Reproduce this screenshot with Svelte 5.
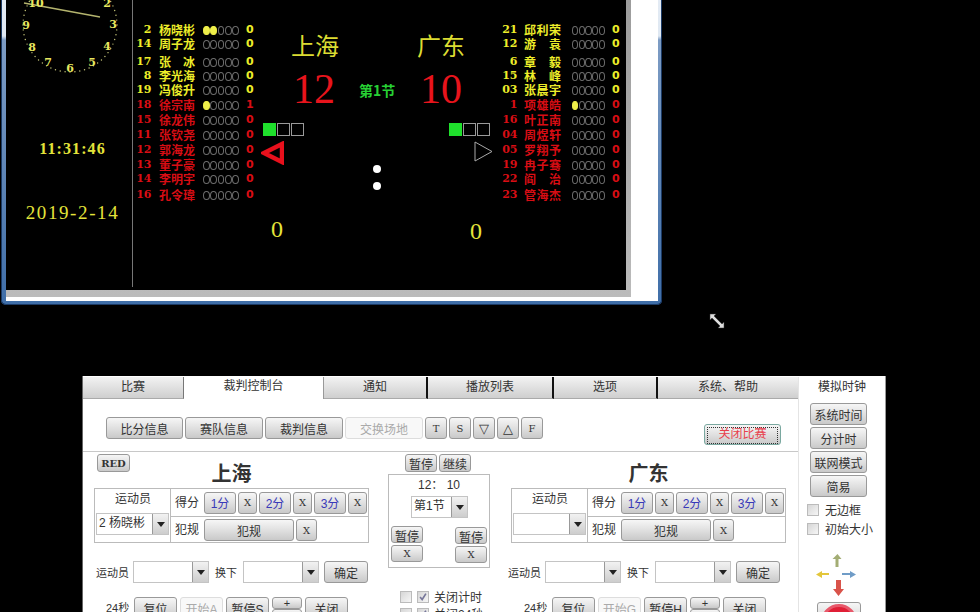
<script>
  const gaps = [0, 0, 4, 0, 0, 1, 1, 1, 1, 1, 0, 2];
  const home = [
    ['2', '杨晓彬', 2, 0], ['14', '周子龙', 0, 0], ['17', '张冰', 0, 0], ['8', '李光海', 0, 0],
    ['19', '冯俊升', 0, 0], ['18', '徐宗南', 1, 1], ['15', '徐龙伟', 0, 0], ['11', '张钦尧', 0, 0],
    ['12', '郭海龙', 0, 0], ['13', '董子豪', 0, 0], ['14', '李明宇', 0, 0], ['16', '孔令瑋', 0, 0]
  ];
  const away = [
    ['21', '邱利荣', 0, 0], ['12', '游袁', 0, 0], ['6', '章毅', 0, 0], ['15', '林峰', 0, 0],
    ['03', '张晨宇', 0, 0], ['1', '项雄皓', 1, 0], ['16', '叶正南', 0, 0], ['04', '周煜轩', 0, 0],
    ['05', '罗翔予', 0, 0], ['19', '冉子骞', 0, 0], ['22', '阎治', 0, 0], ['23', '管海杰', 0, 0]
  ];
  const tabs = ['比赛', '裁判控制台', '通知', '播放列表', '选项', '系统、帮助'];
  const ticks = Array.from({ length: 60 }, (_, i) => {
    const a = (i * Math.PI) / 30;
    return [70 + 47 * Math.sin(a), 25 - 47 * Math.cos(a)];
  });
  const numerals = [
    ['10', 36, 7], ['2', 107, 7], ['3', 113, 28], ['9', 26, 29], ['8', 32, 51],
    ['4', 107, 50], ['7', 48, 66], ['5', 92, 66], ['6', 70, 72]
  ];
</script>

{#snippet list(rows, cls)}
  <div class="list {cls}">
    {#each rows as r, i}
      <div class="row" class:red={i > 4} style="margin-top:{gaps[i]}px">
        <span class="num">{r[0]}</span>
        <span class="name">{r[1]}</span>
        <span class="fouls">
          {#each [0, 1, 2, 3, 4] as k}<i class:on={k < r[2]}></i>{/each}
        </span>
        <span class="pts">{r[3]}</span>
      </div>
    {/each}
  </div>
{/snippet}

{#snippet squares()}
  <div class="squares"><b class="lit"></b><b></b><b></b></div>
{/snippet}

{#snippet dropdown(text, cls)}
  <div class="dd {cls}"><span>{text}</span><em><svg viewBox="0 0 8 5" width="8" height="5"><path d="M0 0h8L4 5z" fill="#222"/></svg></em></div>
{/snippet}

{#snippet team(side, title, player, a, b)}
  <section class="team {side}">
    <header>
      {#if side === 'home'}<button class="red-btn">RED</button>{/if}
      <h2>{title}</h2>
    </header>
    <div class="table">
      <div class="who">
        <div class="who-l">运动员</div>
        {@render dropdown(player, 'who-dd')}
      </div>
      <div class="acts">
        <div class="act first">
          <span>得分</span>
          <button class="pt">1分</button><button class="x">X</button>
          <button class="pt two">2分</button><button class="x">X</button>
          <button class="pt">3分</button><button class="x">X</button>
        </div>
        <div class="act">
          <span>犯规</span>
          <button class="foul">犯规</button><button class="x wide">X</button>
        </div>
      </div>
    </div>
    <div class="sub">
      <span class="lab who-lab">运动员</span>
      {@render dropdown('', 'sub-dd')}
      <span class="lab down">换下</span>
      {@render dropdown('', 'sub-dd')}
      <button class="ok">确定</button>
    </div>
    <div class="shot">
      <span class="lab">24秒</span>
      <button>复位</button>
      <button disabled>{a}</button>
      <button>{b}</button>
      <div class="plus"><button>+</button><button>-</button></div>
      <button>关闭</button>
    </div>
  </section>
{/snippet}

{#snippet check(label, on)}
  <div class="check">
    <i class="cb"></i>
    <i class="cb" class:ticked={on}>{#if on}<svg viewBox="0 0 12 12" width="10" height="10"><path d="M2.5 6l2.5 3 4.500-7" fill="none" stroke="#77779a" stroke-width="2"/></svg>{/if}</i>
    <span>{label}</span>
  </div>
{/snippet}

<div class="desk">
  <div class="win">
    <div class="client">
      <div class="frame">
        <div class="board">
          <aside class="info">
            <svg class="clock" viewBox="0 0 127 75" width="127" height="75">
              {#each ticks as t}<circle cx={t[0]} cy={t[1]} r="0.7" fill="#c8c87a" />{/each}
              <line x1="24" y1="3" x2="100" y2="17" stroke="#b4b46e" stroke-width="1.500" />
              {#each numerals as n}<text x={n[1]} y={n[2]} text-anchor="middle">{n[0]}</text>{/each}
            </svg>
            <div class="time">11:31:46</div>
            <div class="date">2019-2-14</div>
          </aside>
          <div class="stage">
            <h1>全国男子篮球联赛直播系统</h1>
            <div class="lower">
              {@render list(home, 'l')}
              <div class="mid">
                <div class="col a">
                  <div class="tn">上海</div>
                  <div class="sc">12</div>
                  {@render squares()}
                  <svg class="tri" viewBox="0 0 23 24" width="23" height="24"><path d="M3 12L21 3v18z" fill="none" stroke="#e8101c" stroke-width="4.500"/></svg>
                  <div class="zero">0</div>
                </div>
                <div class="col m">
                  <div class="period">第1节</div>
                  <i class="dot"></i><i class="dot two"></i>
                </div>
                <div class="col b">
                  <div class="tn">广东</div>
                  <div class="sc">10</div>
                  {@render squares()}
                  <svg class="tri" viewBox="0 0 19 21" width="19" height="21"><path d="M1 1l17 9.500L1 20z" fill="none" stroke="#aaa" stroke-width="1"/></svg>
                  <div class="zero">0</div>
                </div>
              </div>
              {@render list(away, 'r')}
            </div>
          </div>
        </div>
      </div>
    </div>
  </div>

  <svg class="cursor" viewBox="0 0 16 16" width="16" height="16">
    <path d="M1 1h6L5 3l8 8 2-2v6H9l2-2-8-8-2 2z" fill="#ddd" stroke="#333" stroke-width=".5"/>
  </svg>

  <div class="console">
    <div class="main">
      <nav class="tabs">
        {#each tabs as t, i}<div class="tab" class:active={i === 1}>{t}</div>{/each}
      </nav>
      <div class="toolbar">
        <button class="info-btn first-btn">比分信息</button>
        <button class="info-btn">赛队信息</button>
        <button class="info-btn">裁判信息</button>
        <button class="info-btn" disabled>交换场地</button>
        <button class="tool">T</button>
        <button class="tool">S</button>
        <button class="tool glyph">▽</button>
        <button class="tool glyph">△</button>
        <button class="tool">F</button>
        <button class="close"><span>关闭比赛</span></button>
      </div>
      <div class="panels">
        {@render team('home', '上海', '2 杨晓彬', '开始A', '暂停S')}
        <section class="center">
          <div class="top-btns"><button>暂停</button><button>继续</button></div>
          <div class="timer">
            <div class="t">12： 10</div>
            {@render dropdown('第1节', 'per-dd')}
            <div class="pairs">
              <div class="pair"><button>暂停</button><button>X</button></div>
              <div class="pair low"><button>暂停</button><button>X</button></div>
            </div>
          </div>
          <div class="checks">
            {@render check('关闭计时', true)}
            {@render check('关闭24秒', true)}
          </div>
        </section>
        {@render team('away', '广东', '', '开始G', '暂停H')}
      </div>
    </div>
    <div class="side">
      <div class="side-title">模拟时钟</div>
      <div class="side-btns">
        <button>系统时间</button><button>分计时</button><button>联网模式</button><button>简易</button>
      </div>
      <label class="opt"><i class="cb"></i>无边框</label>
      <label class="opt"><i class="cb"></i>初始大小</label>
      <svg class="arrows" viewBox="0 0 44 44" width="44" height="44">
        <path d="M19.500 14V6h-3l5-5 4 5h-3v8z" fill="#a3ad74"/>
        <path d="M13 22H6v3l-6-3.500L6 18v2h7z" fill="#e3c63a"/>
        <path d="M26 20h8v-2l6 3.500-6 3.500v-3h-8z" fill="#6f9cc7"/>
        <path d="M20 27h5v9h3l-5.500 7-5.500-7h3z" fill="#d9534a"/>
      </svg>
      <button class="power"><i></i></button>
    </div>
  </div>
</div>

<style>
  :global(body) { margin: 0; background: #000; }
  .desk { position: relative; width: 980px; height: 612px; overflow: hidden; background: #000; font-family: "Liberation Sans", "Noto Sans CJK SC", sans-serif; font-size: 12px; color: #333; }
  button { font-family: inherit; font-size: 12px; color: #333; padding: 0; height: 22px; border: 1px solid #999; border-radius: 3px; background: linear-gradient(#f6f6f6, #dedede 55%, #c9c9c9); white-space: nowrap; }
  button:disabled { color: #aaa; border-color: #ddd; background: #f8f8f8; }

  /* top window */
  .win { position: absolute; left: 1px; top: -30px; width: 661px; height: 335px; box-sizing: border-box; padding: 0 4px 4px 5px; border-radius: 0 0 5px 5px; background: linear-gradient(#e8eef6 0, #dfe8f2 66px, #7d9cc4 70px, #3f6ea8 100%); box-shadow: inset 0 -1px #1c3b66, inset 1px 0 #1c3b66, inset -1px 0 #1c3b66; }
  .client { height: 100%; background: #fff; }
  .frame { width: 625px; height: 327px; box-sizing: border-box; padding: 0 5px 7px 0; background: linear-gradient(#999, #bbb); }
  .board { height: 100%; display: flex; background: #000; font-family: "Liberation Serif", "Noto Sans CJK SC", serif; color: #e4e43a; }
  .info { width: 126px; flex: none; border-right: 1px solid #777; margin-bottom: 3px; padding-top: 30px; text-align: center; }
  .clock { display: block; margin-left: -6px; }
  .clock text { font: bold 11px "DejaVu Serif", serif; fill: #e8e860; }
  .time { margin: 64px 0 0 7px; height: 20px; line-height: 20px; font-size: 16px; font-weight: bold; letter-spacing: 1.100px; }
  .date { margin: 43px 0 0 7px; height: 22px; line-height: 22px; font-size: 19px; letter-spacing: 1.600px; white-space: nowrap; }
  .stage { flex: 1; min-width: 0; overflow: hidden; }
  h1 { margin: 0 0 0 98px; height: 33px; overflow: hidden; white-space: nowrap; font: bold 26px/26px "Noto Sans CJK SC", sans-serif; color: #9c0c10; padding-top: 3px; box-sizing: border-box; }
  .lower { display: flex; }
  .list { padding-top: 20px; flex: none; }
  .row { display: grid; height: 14px; align-items: center; color: #eded2a; grid-template-columns: 18px 37px 37px 8px; column-gap: 7px; }
  .l .name { margin-left: 1px; }
  .l .fouls { margin-left: 1px; }
  .r .fouls { margin-left: 4px; }
  .row.red { color: #d80d14; }
  .num { text-align: right; font: bold 11px/14px "DejaVu Serif", serif; letter-spacing: -.3px; }
  .name { font: bold 12px/14px "Noto Sans CJK SC", sans-serif; text-align: justify; text-align-last: justify; }
  .fouls { display: flex; gap: .5px; }
  .fouls i { width: 7px; height: 9px; box-sizing: border-box; border: 1px solid #6c6c6c; border-radius: 50%; }
  .fouls i.on { background: #efef4a; border-color: #efef4a; }
  .pts { font: bold 11px/14px "DejaVu Sans", sans-serif; }
  .mid { width: 245px; flex: none; display: flex; }
  .col { padding-top: 29px; }
  .col.a { width: 101px; }
  .col.m { width: 44px; }
  .col.b { width: 100px; }
  .tn { height: 26px; font: 24px/26px "Noto Sans CJK SC", sans-serif; color: #dcdc32; }
  .sc { margin-top: 10px; height: 42px; font-size: 42px; line-height: 42px; color: #e8141c; }
  .squares { margin-top: 13px; display: flex; gap: 1px; }
  .squares b { width: 13px; height: 13px; box-sizing: border-box; border: 1px solid #9a9a9a; }
  .squares b.lit { background: #1fe02c; border-color: #1fe02c; }
  .tri { display: block; margin-top: 5px; }
  .zero { height: 22px; font-size: 24px; line-height: 22px; }
  .a .tn { margin-left: 37px; }
  .a .sc { margin-left: 39px; }
  .a .squares { margin-left: 9px; }
  .a .tri { margin-left: 7px; }
  .a .zero { margin: 53px 0 0 17px; }
  .b .tn { margin-left: 18px; }
  .b .sc { margin-left: 21px; }
  .b .squares { margin-left: 50px; }
  .b .tri { margin-left: 75px; }
  .b .zero { margin: 58px 0 0 71px; }
  .period { margin-top: 48px; margin-left: 4px; height: 20px; font: bold 14px/20px "Noto Sans CJK SC", sans-serif; color: #27d034; white-space: nowrap; }
  .dot { display: block; width: 8px; height: 8px; border-radius: 50%; background: #fff; margin: 65px 0 0 18px; }
  .dot.two { margin-top: 9px; }

  .cursor { position: absolute; left: 709px; top: 313px; }

  /* console window */
  .console { position: absolute; left: 82px; top: 376px; width: 804px; height: 300px; box-sizing: border-box; display: flex; background: #fff; border-left: 1px solid #666; border-right: 1px solid #999; padding-top: 1px; }
  .main { width: 715px; flex: none; border-right: 1px solid #e4e4e4; }
  .tabs { display: grid; grid-template-columns: 101px 140px 104px 126px 104px 140px; height: 21px; }
  .tab { text-align: center; line-height: 21px; background: linear-gradient(#f2f2f2, #cfcfcf); border-right: 1px solid #777; border-bottom: 1px solid #aaa; box-sizing: border-box; }
  .tab:nth-child(3), .tab:nth-child(4), .tab:nth-child(5) { border-right: 2px solid #111; }
  .tab:nth-child(6) { border-right: 0; }
  .tab.active { background: #fff; border-bottom: 0; border-right: 1px solid #999; line-height: 19px; }
  .toolbar { height: 54px; box-sizing: border-box; padding: 19px 17px 0 23px; display: flex; align-items: flex-start; gap: 2px; border-bottom: 1px solid #c8c8c8; }
  .info-btn { width: 78px; }
  .first-btn { width: 77px; }
  .tool { width: 22px; font-family: "DejaVu Serif", serif; font-size: 10px; }
  .tool.glyph { font: 13px "DejaVu Sans", sans-serif; }
  .close { margin: 7px 0 0 auto; width: 77px; height: 21px; border-color: #7aa8a0; padding: 2px; color: #e8404c; }
  .close span { display: block; line-height: 13px; height: 15px; border: 1px dotted #333; }

  .panels { display: grid; grid-template-columns: 275px 102px 277px; column-gap: 19px; padding-left: 11px; }
  .team.away { padding-left: 2px; }
  header { height: 36px; position: relative; text-align: center; }
  header h2 { margin: 0; padding-top: 9px; font: bold 20px/24px "Noto Sans CJK SC", sans-serif; color: #333; }
  .red-btn { position: absolute; left: 3px; top: 2px; width: 33px; height: 18px; font: bold 10px "DejaVu Serif", serif; }
  .table { height: 55px; box-sizing: border-box; border: 1px solid #bbb; display: flex; }
  .who { width: 76px; flex: none; border-right: 1px solid #bbb; padding: 1px 0 0 1px; text-align: center; box-sizing: border-box; }
  .who-l { height: 18px; line-height: 18px; margin-bottom: 5px; }
  .dd { display: flex; height: 22px; box-sizing: border-box; border: 1px solid #c4c4c4; background: #fff; }
  .dd span { flex: 1; min-width: 0; padding-left: 2px; line-height: 19px; text-align: left; white-space: nowrap; overflow: hidden; }
  .dd em { width: 15px; flex: none; display: flex; align-items: center; justify-content: center; border-left: 1px solid #999; background: linear-gradient(#f2f2f2, #cdcdcd); }
  .who-dd { width: 73px; }
  .acts { flex: 1; min-width: 0; }
  .act { height: 26px; display: flex; align-items: center; gap: 2px; padding-left: 4px; }
  .act.first { height: 27px; border-bottom: 1px solid #bbb; }
  .act span { width: 26px; flex: none; line-height: 22px; white-space: nowrap; margin-right: 1px; }
  .act button { height: 22px; flex: none; }
  .pt { width: 32px; color: #3838b8; }
  .x { width: 19px; font: 10px "DejaVu Serif", serif; }
  .x.wide { width: 21px; }
  .foul { width: 90px; }
  .lab { flex: none; white-space: nowrap; font-size: 11px; }
  .who-lab { width: 32px; }
  .down { width: 23px; margin-left: 1px; }
  .sub { margin-top: 18px; display: flex; align-items: center; gap: 5px; padding-left: 2px; }
  .team.away .sub { margin-left: -5px; }
  .sub-dd { width: 76px; flex: none; }
  .ok { width: 44px; flex: none; }
  .shot { margin-top: 14px; padding-left: 12px; display: flex; align-items: flex-start; gap: 3px; }
  .shot .lab { width: 22px; margin-right: 3px; line-height: 22px; }
  .shot button { width: 43px; flex: none; }
  .team.away .shot { padding-left: 13px; }
  .plus { display: flex; flex-direction: column; width: 30px; }
  .shot .plus button { width: 30px; height: 12px; line-height: 9px; font-size: 11px; }

  .top-btns { margin: 2px 0 2px 17px; display: flex; gap: 2px; }
  .top-btns button { width: 32px; height: 18px; }
  .timer { height: 94px; box-sizing: border-box; border: 1px solid #bbb; padding-top: 2px; text-align: center; }
  .t { height: 17px; line-height: 17px; }
  .per-dd { width: 57px; margin: 2px 0 0 22px; }
  .pairs { margin-top: 8px; display: flex; justify-content: space-between; padding: 0 2px; }
  .pair { width: 32px; }
  .pair button { display: block; width: 32px; height: 17px; margin-bottom: 2px; }
  .pair button:last-child { font: 10px "DejaVu Serif", serif; }
  .pair.low { margin-top: 1px; }
  .checks { margin: 22px 0 0 12px; }
  .check { display: flex; align-items: center; height: 13px; gap: 5px; margin-bottom: 4px; white-space: nowrap; }
  .cb { flex: none; display: inline-flex; align-items: center; justify-content: center; width: 12px; height: 12px; box-sizing: border-box; border: 1px solid #bbb; background: linear-gradient(135deg, #d6d6d6, #f6f6f6); }

  .side { flex: 1; min-width: 0; }
  .side-title { height: 26px; line-height: 20px; text-align: center; }
  .side-btns { margin-left: 11px; display: flex; flex-direction: column; gap: 2px; }
  .side-btns button { width: 57px; }
  .opt { display: flex; align-items: center; gap: 6px; margin: 6px 0 0 8px; height: 13px; white-space: nowrap; }
  .arrows { display: block; margin: 18px 0 0 17px; }
  .power { display: block; width: 44px; height: 26px; margin: 5px 0 0 18px; position: relative; overflow: hidden; }
  .power i { display: block; width: 36px; height: 36px; margin: 1px 0 0 3px; box-sizing: border-box; border: 3px solid #e8586a; border-radius: 50%; background: #e01f36; }
</style>
